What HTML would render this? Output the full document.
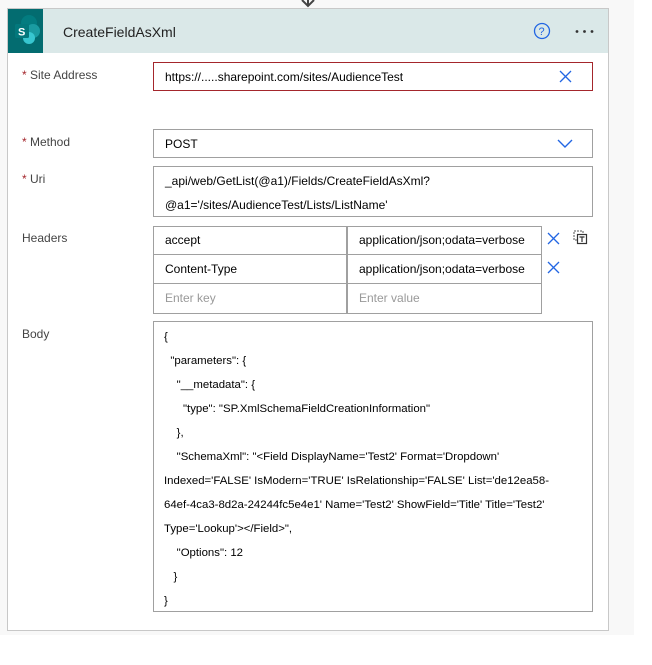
<!DOCTYPE html>
<html><head><meta charset="utf-8"><style>
*{margin:0;padding:0;box-sizing:border-box}
body{width:652px;height:665px;background:#fff;font-family:"Liberation Sans",sans-serif;font-size:12px;color:#000;position:relative;overflow:hidden}
.bg{position:absolute;left:0;top:0;width:634px;height:635px;background:#f8f8f8}
.card{position:absolute;left:7px;top:8px;width:602px;height:623px;background:#fff;border:1px solid #c8c8c8}
.hdr{position:absolute;left:0;top:0;width:600px;height:44px;background:#dae8e8}
.logo{position:absolute;left:0;top:0;width:35px;height:44px;background:#036c70}
.abs{position:absolute}
.lbl{position:absolute;left:14px;color:#444;font-size:12px}
.lbl b{color:#a4262c;font-weight:normal}
.box{position:absolute;border:1px solid #a0a0a0;background:#fff}
.t{position:absolute;white-space:nowrap}
.ph{color:#999}
.body .t{font-size:11.4px}
</style></head><body>
<div class="bg"></div>
<svg class="abs" style="left:300px;top:0" width="16" height="8"><path d="M2 0 L8 6 L14 0 M8 0 L8 6" stroke="#444" stroke-width="2" fill="none"/></svg>
<div class="card">
 <div class="hdr">
  <div class="logo">
   <svg width="35" height="44"><circle cx="21" cy="14" r="8" fill="#037c80"/><circle cx="25" cy="22" r="7" fill="#1a9ba1"/><circle cx="21" cy="29" r="6" fill="#37c6d0"/><rect x="7" y="15" width="14" height="14" rx="1.5" fill="#03787c"/><text x="10" y="26.5" fill="#fff" font-size="11" font-weight="bold" font-family="Liberation Sans">S</text></svg>
  </div>
  <div class="t" style="left:55px;top:15px;font-size:14px;color:#222">CreateFieldAsXml</div>
  <svg class="abs" style="left:525px;top:13px" width="18" height="18"><circle cx="9" cy="9" r="7.5" stroke="#2266e3" stroke-width="1.3" fill="none"/><text x="5.5" y="13" font-size="11" fill="#2266e3" font-family="Liberation Sans">?</text></svg>
  <svg class="abs" style="left:566px;top:20px" width="22" height="5"><circle cx="3" cy="2.5" r="1.4" fill="#333"/><circle cx="10.5" cy="2.5" r="1.4" fill="#333"/><circle cx="18" cy="2.5" r="1.4" fill="#333"/></svg>
 </div>
</div>
<div class="lbl" style="top:68px;left:22px"><b>*</b> Site Address</div>
<div class="box" style="left:153px;top:62px;width:440px;height:29px;border-color:#a4262c"><div class="t" style="left:11px;top:7px">https://.....sharepoint.com/sites/AudienceTest</div></div>
<svg class="abs" style="left:559px;top:70px" width="13" height="13"><path d="M1 1L12 12M12 1L1 12" stroke="#2266e3" stroke-width="1.3"/></svg>

<div class="lbl" style="top:135px;left:22px"><b>*</b> Method</div>
<div class="box" style="left:153px;top:129px;width:440px;height:29px"><div class="t" style="left:11px;top:7px">POST</div></div>
<svg class="abs" style="left:557px;top:139px" width="16" height="10"><path d="M1 1L8 8L15 1" stroke="#2266e3" stroke-width="1.4" fill="none"/></svg>

<div class="lbl" style="top:172px;left:22px"><b>*</b> Uri</div>
<div class="box" style="left:153px;top:166px;width:440px;height:51px"><div class="t" style="left:11px;top:7px">_api/web/GetList(@a1)/Fields/CreateFieldAsXml?</div><div class="t" style="left:11px;top:31px">@a1='/sites/AudienceTest/Lists/ListName'</div></div>

<div class="lbl" style="top:231px;left:22px">Headers</div>
<div class="box" style="left:153px;top:226px;width:389px;height:88px"></div>
<div class="abs" style="left:153px;top:254px;width:389px;height:1px;background:#a0a0a0"></div>
<div class="abs" style="left:153px;top:283px;width:389px;height:1px;background:#a0a0a0"></div>
<div class="abs" style="left:346px;top:226px;width:2px;height:88px;background:#a0a0a0"></div>
<div class="t" style="left:165px;top:233px">accept</div>
<div class="t" style="left:359px;top:233px">application/json;odata=verbose</div>
<div class="t" style="left:165px;top:262px">Content-Type</div>
<div class="t" style="left:359px;top:262px">application/json;odata=verbose</div>
<div class="t ph" style="left:165px;top:291px">Enter key</div>
<div class="t ph" style="left:359px;top:291px">Enter value</div>
<svg class="abs" style="left:547px;top:232px" width="13" height="13"><path d="M1 1L12 12M12 1L1 12" stroke="#2266e3" stroke-width="1.3"/></svg>
<svg class="abs" style="left:547px;top:261px" width="13" height="13"><path d="M1 1L12 12M12 1L1 12" stroke="#2266e3" stroke-width="1.3"/></svg>
<svg class="abs" style="left:573px;top:230px" width="15" height="15"><rect x="1" y="1" width="9" height="9" fill="none" stroke="#555" stroke-dasharray="2 1"/><rect x="4.5" y="4.5" width="9" height="9" fill="#fff" stroke="#333" stroke-width="1.2"/><path d="M6.5 7H11.5M9 7V12" stroke="#333" stroke-width="1.2"/></svg>

<div class="lbl" style="top:327px;left:22px">Body</div>
<div class="box body" style="left:153px;top:321px;width:440px;height:291px">
<div class="t" style="left:10px;top:9px">{</div>
<div class="t" style="left:10px;top:33px">&nbsp;&nbsp;"parameters": {</div>
<div class="t" style="left:10px;top:57px">&nbsp;&nbsp;&nbsp;&nbsp;"__metadata": {</div>
<div class="t" style="left:10px;top:81px">&nbsp;&nbsp;&nbsp;&nbsp;&nbsp;&nbsp;"type": "SP.XmlSchemaFieldCreationInformation"</div>
<div class="t" style="left:10px;top:105px">&nbsp;&nbsp;&nbsp;&nbsp;},</div>
<div class="t" style="left:10px;top:129px">&nbsp;&nbsp;&nbsp;&nbsp;"SchemaXml": "&lt;Field DisplayName='Test2' Format='Dropdown'</div>
<div class="t" style="left:10px;top:153px">Indexed='FALSE' IsModern='TRUE' IsRelationship='FALSE' List='de12ea58-</div>
<div class="t" style="left:10px;top:177px">64ef-4ca3-8d2a-24244fc5e4e1' Name='Test2' ShowField='Title' Title='Test2'</div>
<div class="t" style="left:10px;top:201px">Type='Lookup'&gt;&lt;/Field&gt;",</div>
<div class="t" style="left:10px;top:225px">&nbsp;&nbsp;&nbsp;&nbsp;"Options": 12</div>
<div class="t" style="left:10px;top:249px">&nbsp;&nbsp;&nbsp;}</div>
<div class="t" style="left:10px;top:273px">}</div>
</div>
</body></html>
